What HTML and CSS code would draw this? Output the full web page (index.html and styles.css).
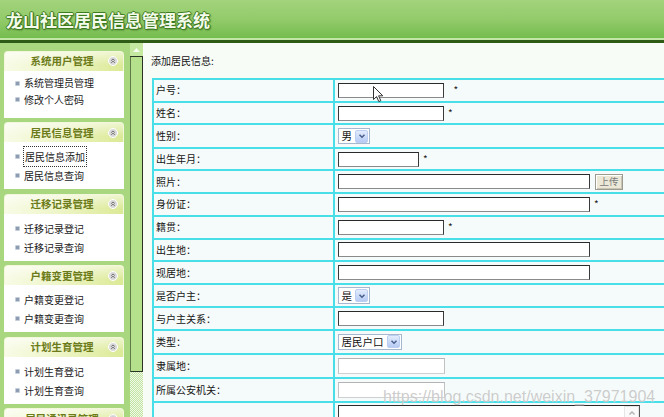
FILE: index.html
```html
<!DOCTYPE html>
<html lang="zh-CN">
<head>
<meta charset="utf-8">
<title>龙山社区居民信息管理系统</title>
<link rel="stylesheet" href="styles.css">
</head>
<body>
<header class="header">
  <h1 class="title">龙山社区居民信息管理系统</h1>
</header>
<div class="layout">
  <aside class="sidebar">
    <section class="panel">
      <div class="panel-head"><span class="panel-title">系统用户管理</span><svg class="toggle" viewBox="0 0 10 10" width="10" height="10"><circle cx="5" cy="5" r="4.5" fill="#d9d9d9" stroke="#fff"/><polyline points="3.2,4.6 5,3 6.8,4.6" fill="none" stroke="#666" stroke-width="0.9"/><polyline points="3.2,6.8 5,5.2 6.8,6.8" fill="none" stroke="#666" stroke-width="0.9"/></svg></div>
      <ul class="panel-body tight">
        <li><i class="dot"></i>系统管理员管理</li>
        <li><i class="dot"></i>修改个人密码</li>
      </ul>
    </section>
    <section class="panel">
      <div class="panel-head"><span class="panel-title">居民信息管理</span><svg class="toggle" viewBox="0 0 10 10" width="10" height="10"><circle cx="5" cy="5" r="4.5" fill="#d9d9d9" stroke="#fff"/><polyline points="3.2,4.6 5,3 6.8,4.6" fill="none" stroke="#666" stroke-width="0.9"/><polyline points="3.2,6.8 5,5.2 6.8,6.8" fill="none" stroke="#666" stroke-width="0.9"/></svg></div>
      <ul class="panel-body">
        <li><i class="dot"></i><span class="focused">居民信息添加</span></li>
        <li><i class="dot"></i>居民信息查询</li>
      </ul>
    </section>
    <section class="panel">
      <div class="panel-head"><span class="panel-title">迁移记录管理</span><svg class="toggle" viewBox="0 0 10 10" width="10" height="10"><circle cx="5" cy="5" r="4.5" fill="#d9d9d9" stroke="#fff"/><polyline points="3.2,4.6 5,3 6.8,4.6" fill="none" stroke="#666" stroke-width="0.9"/><polyline points="3.2,6.8 5,5.2 6.8,6.8" fill="none" stroke="#666" stroke-width="0.9"/></svg></div>
      <ul class="panel-body">
        <li><i class="dot"></i>迁移记录登记</li>
        <li><i class="dot"></i>迁移记录查询</li>
      </ul>
    </section>
    <section class="panel">
      <div class="panel-head"><span class="panel-title">户籍变更管理</span><svg class="toggle" viewBox="0 0 10 10" width="10" height="10"><circle cx="5" cy="5" r="4.5" fill="#d9d9d9" stroke="#fff"/><polyline points="3.2,4.6 5,3 6.8,4.6" fill="none" stroke="#666" stroke-width="0.9"/><polyline points="3.2,6.8 5,5.2 6.8,6.8" fill="none" stroke="#666" stroke-width="0.9"/></svg></div>
      <ul class="panel-body">
        <li><i class="dot"></i>户籍变更登记</li>
        <li><i class="dot"></i>户籍变更查询</li>
      </ul>
    </section>
    <section class="panel">
      <div class="panel-head"><span class="panel-title">计划生育管理</span><svg class="toggle" viewBox="0 0 10 10" width="10" height="10"><circle cx="5" cy="5" r="4.5" fill="#d9d9d9" stroke="#fff"/><polyline points="3.2,4.6 5,3 6.8,4.6" fill="none" stroke="#666" stroke-width="0.9"/><polyline points="3.2,6.8 5,5.2 6.8,6.8" fill="none" stroke="#666" stroke-width="0.9"/></svg></div>
      <ul class="panel-body">
        <li><i class="dot"></i>计划生育登记</li>
        <li><i class="dot"></i>计划生育查询</li>
      </ul>
    </section>
    <section class="panel">
      <div class="panel-head"><span class="panel-title">居民通讯录管理</span><svg class="toggle" viewBox="0 0 10 10" width="10" height="10"><circle cx="5" cy="5" r="4.5" fill="#d9d9d9" stroke="#fff"/><polyline points="3.2,4.6 5,3 6.8,4.6" fill="none" stroke="#666" stroke-width="0.9"/><polyline points="3.2,6.8 5,5.2 6.8,6.8" fill="none" stroke="#666" stroke-width="0.9"/></svg></div>
      <ul class="panel-body">
        <li><i class="dot"></i>通讯录登记</li>
        <li><i class="dot"></i>通讯录查询</li>
      </ul>
    </section>
  </aside>
  <div class="scrollbar">
    <div class="sb-up"><svg viewBox="0 0 7 4" width="7" height="4"><polygon points="0,4 3.5,0 7,4" fill="#f4fff0"/></svg></div>
    <div class="sb-thumb"></div>
    <div class="sb-track"></div>
  </div>
  <main class="main">
    <p class="page-title">添加居民信息:</p>
    <table class="form-table">
      <tr><td class="label">户号：</td><td class="field"><input class="input w106" type="text"><span class="req wide">*</span></td></tr>
      <tr><td class="label">姓名：</td><td class="field"><input class="input w106" type="text"><span class="req">*</span></td></tr>
      <tr class="sel"><td class="label">性别：</td><td class="field"><span class="select w32"><span class="select-val">男</span><span class="select-btn"><svg viewBox="0 0 8 8" width="8" height="8"><polyline points="1.5,2.8 4,5.2 6.5,2.8" fill="none" stroke="#4a5f8c" stroke-width="1.5"/></svg></span></span></td></tr>
      <tr><td class="label">出生年月：</td><td class="field"><input class="input w81" type="text"><span class="req">*</span></td></tr>
      <tr><td class="label">照片：</td><td class="field"><input class="input w252" type="text"><button class="btn-upload" type="button">上传</button></td></tr>
      <tr><td class="label">身份证：</td><td class="field"><input class="input w252" type="text"><span class="req">*</span></td></tr>
      <tr><td class="label">籍贯：</td><td class="field"><input class="input w106" type="text"><span class="req">*</span></td></tr>
      <tr><td class="label">出生地：</td><td class="field"><input class="input w252" type="text"></td></tr>
      <tr><td class="label">现居地：</td><td class="field"><input class="input w252" type="text"></td></tr>
      <tr class="sel"><td class="label">是否户主：</td><td class="field"><span class="select w32"><span class="select-val">是</span><span class="select-btn"><svg viewBox="0 0 8 8" width="8" height="8"><polyline points="1.5,2.8 4,5.2 6.5,2.8" fill="none" stroke="#4a5f8c" stroke-width="1.5"/></svg></span></span></td></tr>
      <tr><td class="label">与户主关系：</td><td class="field"><input class="input w106" type="text"></td></tr>
      <tr class="tall"><td class="label">类型：</td><td class="field"><span class="select w64"><span class="select-val">居民户口</span><span class="select-btn"><svg viewBox="0 0 8 8" width="8" height="8"><polyline points="1.5,2.8 4,5.2 6.5,2.8" fill="none" stroke="#4a5f8c" stroke-width="1.5"/></svg></span></span></td></tr>
      <tr class="tall"><td class="label">隶属地：</td><td class="field"><input class="input ro w107" type="text" readonly></td></tr>
      <tr class="tall"><td class="label">所属公安机关：</td><td class="field"><input class="input ro w107" type="text" readonly></td></tr>
      <tr class="last"><td class="label"></td><td class="field top"><div class="textarea"><div class="ta-bar"><div class="ta-up"><svg viewBox="0 0 8 6" width="8" height="6"><polyline points="1.5,4.5 4,2 6.5,4.5" fill="none" stroke="#b0b0b0" stroke-width="1.3"/></svg></div></div></div></td></tr>
    </table>
  </main>
</div>
<svg class="cursor" viewBox="0 0 11 17" width="11" height="17"><path d="M0.5,0.5 L0.5,13.5 L3.6,10.6 L5.8,15.6 L7.8,14.7 L5.6,9.8 L9.8,9.8 Z" fill="#fff" stroke="#333" stroke-width="1"/></svg>
<div class="watermark">https://blog.csdn.net/weixin_37971904</div>
</body>
</html>
```

FILE: styles.css
```css
* { box-sizing: border-box; }
html, body { margin: 0; padding: 0; }
body {
  width: 664px;
  height: 417px;
  overflow: hidden;
  position: relative;
  font-family: "Noto Sans CJK SC", "Noto Sans", sans-serif;
  font-size: 10px;
  color: #151515;
  background: #f7fcf7;
}

/* header */
.header {
  height: 43px;
  background: linear-gradient(to bottom, #a3d37c 0, #93cb6b 19px, #75bd4f 38px, #c2e6a6 38px, #c2e6a6 40px, #2e5c17 40px);
}
.title {
  margin: 0;
  padding-left: 6px;
  font-size: 17px;
  line-height: 39px;
  font-weight: 700;
  color: #f4fbea;
  letter-spacing: 0;
  text-shadow: 1px 0 #3e7c22, -1px 0 #3e7c22, 0 1px #3e7c22, 0 -1px #3e7c22, 1px 1px 2px #2a5a14;
}

/* layout */
.layout { display: flex; height: 374px; }

/* sidebar */
.sidebar {
  width: 130px;
  flex: none;
  background: #a8d77f;
  padding: 7.5px 6px 0 4px;
  overflow: hidden;
}
.panel { margin-bottom: 4.5px; }
.panel-head {
  position: relative;
  height: 20px;
  border-radius: 4px 4px 0 0;
  border: 1px solid #f3f8dc;
  border-bottom: none;
  background:
    linear-gradient(to bottom, rgba(255,255,255,.55), rgba(255,255,255,0) 70%),
    linear-gradient(to right, #f8fbe6, #eef5c8 45%, #dbea96);
  display: flex;
  align-items: center;
  padding-right: 4px;
}
.panel-title {
  flex: 1;
  text-align: center;
  font-size: 10.5px;
  font-weight: 700;
  color: #6c7b19;
  line-height: 18px;
  white-space: nowrap;
}
.toggle { position: absolute; right: 5px; top: 4.5px; }
.panel-body {
  list-style: none;
  margin: 0;
  background: #fff;
  padding: 5px 0 4px 11px;
}
.panel-body li {
  height: 19px;
  line-height: 19px;
  display: flex;
  align-items: center;
  white-space: nowrap;
  color: #1a1a1a;
}
.panel-body.tight { padding-top: 4.5px; padding-bottom: 9.5px; }
.panel-body.tight li { height: 16.5px; line-height: 16.5px; }
.dot {
  width: 5px;
  height: 5px;
  margin-right: 4px;
  border-radius: 1px;
  background: #8e9cb2;
  border: 1px solid #c5cedb;
  flex: none;
}
.focused { outline: 1px dotted #333; outline-offset: 0; padding: 0 1px; }

/* sidebar scrollbar */
.scrollbar {
  width: 13px;
  flex: none;
  display: flex;
  flex-direction: column;
}
.sb-up {
  height: 14px;
  flex: none;
  background: #c5e9a1;
  border-bottom: 1px solid #2e3828;
  display: flex;
  align-items: center;
  justify-content: center;
}
.sb-thumb {
  height: 315px;
  flex: none;
  background: #b6e18c;
  border-left: 1px solid #5f7a48;
  border-right: 1px solid #2b3325;
  border-bottom: 1px solid #2b3325;
}
.sb-track {
  flex: 1;
  background: repeating-conic-gradient(#c2e5a2 0 25%, #eff8e6 0 50%) 0 0 / 2px 2px;
}

/* main */
.main {
  flex: 1;
  min-width: 0;
  background: #f7fcf7;
  padding: 10.5px 0 0 8px;
  overflow: hidden;
}
.page-title {
  margin: 0 0 10.5px;
  font-size: 10px;
  line-height: 14px;
}
.form-table {
  margin-left: 1px;
  border-collapse: separate;
  border-spacing: 0;
  border-top: 2px solid #48dfe8;
  border-left: 2px solid #48dfe8;
  width: 620px;
}
.form-table tr { height: 22.7px; }
.form-table tr.sel { height: 23.4px; }
.form-table tr.tall { height: 24px; }
.form-table tr.last { height: 50px; }
.form-table td {
  border-right: 2px solid #48dfe8;
  border-bottom: 2px solid #48dfe8;
  background: #f5fbfa;
  padding: 0;
  vertical-align: middle;
  white-space: nowrap;
}
.form-table td.label { width: 181px; padding-left: 2px; line-height: 12px; }
.form-table td.field { padding-left: 3px; font-size: 0; }
.form-table td.top { vertical-align: top; padding-top: 2.3px; }

.input {
  display: inline-block;
  vertical-align: middle;
  height: 15px;
  margin: 0;
  padding: 0;
  border: 1px solid;
  border-color: #2a2a2a #3a3a3a #8a8a8a #3a3a3a;
  background: #fff;
  font-size: 10px;
}
.input.ro { height: 16.6px; border-color: #b4b4b4 #c2c2c2 #cfcfcf #c2c2c2; }
.w81 { width: 80.5px; }
.w106 { width: 105.5px; }
.w107 { width: 107px; }
.w252 { width: 251.5px; }

.req {
  display: inline-block;
  vertical-align: middle;
  margin-left: 4.5px;
  font-size: 10px;
  line-height: 12px;
  color: #222;
}
.req.wide { margin-left: 10px; }

.select {
  display: inline-flex;
  align-items: center;
  justify-content: space-between;
  vertical-align: middle;
  height: 16.5px;
  border: 1px solid #a6b8cf;
  background: #fff;
  padding-left: 2.5px;
}
.select.w32 { width: 32px; }
.select.w64 { width: 64px; }
.select-val { font-size: 10.5px; line-height: 14px; color: #111; }
.select-btn {
  width: 13px;
  height: 13px;
  margin-right: 1px;
  border: 1px solid #bccff2;
  border-radius: 2px;
  background: linear-gradient(#e3ecfd, #b6caf3);
  display: flex;
  align-items: center;
  justify-content: center;
}

.btn-upload {
  vertical-align: middle;
  margin: 0 0 0 5.5px;
  width: 28px;
  height: 16px;
  padding: 0;
  font-family: inherit;
  font-size: 9.5px;
  line-height: 13px;
  color: #7a7a7a;
  background: #ebe8d8;
  border: 1px solid #9d9a8f;
  box-shadow: inset 1px 1px #fff, inset -1px -1px #c9c5b4;
}

.textarea {
  display: flex;
  justify-content: flex-end;
  width: 302px;
  height: 40px;
  border: 1px solid;
  border-color: #2a2a2a #555 #888 #3a3a3a;
  background: #fff;
}
.ta-bar { width: 15px; background: #f4f4f4; }
.ta-up {
  height: 14px;
  background: #fafafa;
  border: 1px solid #e6e6e6;
  display: flex;
  align-items: center;
  justify-content: center;
}

/* overlays */
.cursor { position: absolute; left: 373px; top: 86px; }
.watermark {
  position: absolute;
  left: 383px;
  top: 389px;
  font-family: "Liberation Sans", Arial, sans-serif;
  font-size: 16px;
  line-height: 16px;
  color: rgba(170, 170, 170, 0.6);
  text-shadow: 0 0 1px rgba(255,255,255,.9);
  white-space: nowrap;
  pointer-events: none;
}
```
